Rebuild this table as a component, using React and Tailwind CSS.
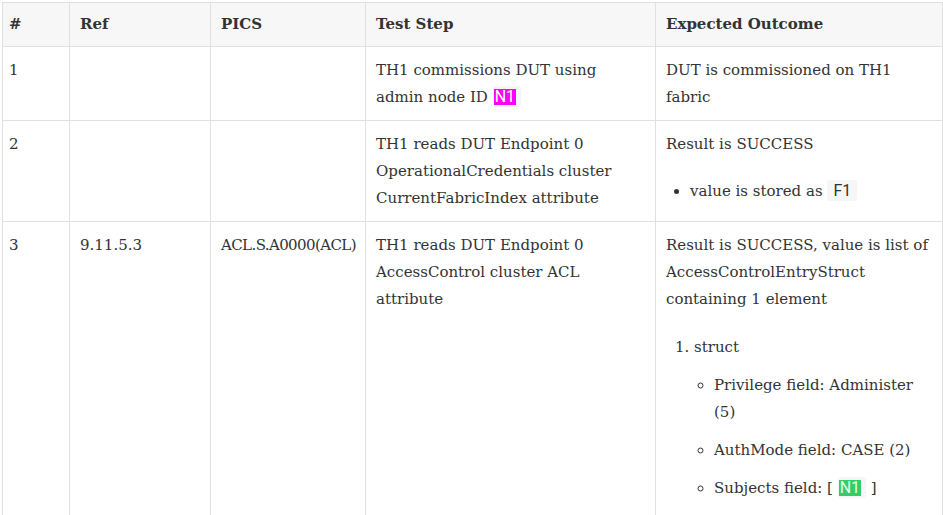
const serif = { fontFamily: '"DejaVu Serif", "Liberation Serif", serif' };

function Code({ children, mark }) {
  const marks = {
    magenta: 'bg-[#ff00ff] text-white',
    green: 'bg-[#33cc66] text-[#e6ffe6]',
  };
  return (
    <code
      className={
        'inline-block rounded-[3px] bg-[#f6f6f6] text-[16px] leading-[21px] font-["Roboto",sans-serif] text-[#333] ' +
        (mark ? 'pl-[1px] pr-[5px]' : 'px-[6px]')
      }
    >
      {mark ? <span className={'inline-block leading-[16px] px-[1px] ' + marks[mark]}>{children}</span> : children}
    </code>
  );
}

const rows = [
  {
    n: '1',
    ref: '',
    pics: '',
    step: (
      <>
        TH1 commissions DUT using admin node ID <Code mark="magenta">N1</Code>
      </>
    ),
    outcome: <p>DUT is commissioned on TH1 fabric</p>,
  },
  {
    n: '2',
    ref: '',
    pics: '',
    step: 'TH1 reads DUT Endpoint 0 OperationalCredentials cluster CurrentFabricIndex attribute',
    outcome: (
      <>
        <p>Result is SUCCESS</p>
        <ul className="list-disc pl-[24px] mt-[20px] mb-[4px]">
          <li>
            value is stored as <Code>F1</Code>
          </li>
        </ul>
      </>
    ),
  },
  {
    n: '3',
    ref: '9.11.5.3',
    pics: 'ACL.S.A0000(ACL)',
    step: 'TH1 reads DUT Endpoint 0 AccessControl cluster ACL attribute',
    outcome: (
      <>
        <p>Result is SUCCESS, value is list of AccessControlEntryStruct containing 1 element</p>
        <ol className="list-decimal pl-[28px] mt-[21px] mb-[30px]">
          <li>
            struct
            <ul className="list-[circle] pl-[20px] mt-[11px] flex flex-col gap-[11px]">
              <li>Privilege field: Administer (5)</li>
              <li>AuthMode field: CASE (2)</li>
              <li>
                Subjects field: [ <Code mark="green">N1</Code> ]
              </li>
            </ul>
          </li>
        </ol>
      </>
    ),
  },
];

export default function App() {
  const td = 'border border-[#e0e0e0] align-top px-[10px] pt-[10px] pb-[9px]';
  const th = 'border border-[#e0e0e0] text-left font-bold px-[10px] h-[44px]';
  return (
    <div className="w-[943px] h-[515px] overflow-hidden bg-white pl-[2px] pt-[2px]" style={serif}>
      <table className="table-fixed border-collapse w-[940px] text-[15px] leading-[27px] text-[#333]">
        <colgroup>
          <col className="w-[67px]" />
          <col className="w-[141px]" />
          <col className="w-[155px]" />
          <col className="w-[290px]" />
          <col className="w-[287px]" />
        </colgroup>
        <thead>
          <tr className="bg-[#f7f7f7]">
            <th className={th + ' pl-[6px]'}>#</th>
            <th className={th}>Ref</th>
            <th className={th}>PICS</th>
            <th className={th}>Test Step</th>
            <th className={th}>Expected Outcome</th>
          </tr>
        </thead>
        <tbody>
          {rows.map((r) => (
            <tr key={r.n}>
              <td className={td + ' pl-[6px]'}>{r.n}</td>
              <td className={td}>{r.ref}</td>
              <td className={td + ' whitespace-nowrap tracking-[-0.6px]'}>{r.pics}</td>
              <td className={td}>{r.step}</td>
              <td className={td}>{r.outcome}</td>
            </tr>
          ))}
        </tbody>
      </table>
    </div>
  );
}
